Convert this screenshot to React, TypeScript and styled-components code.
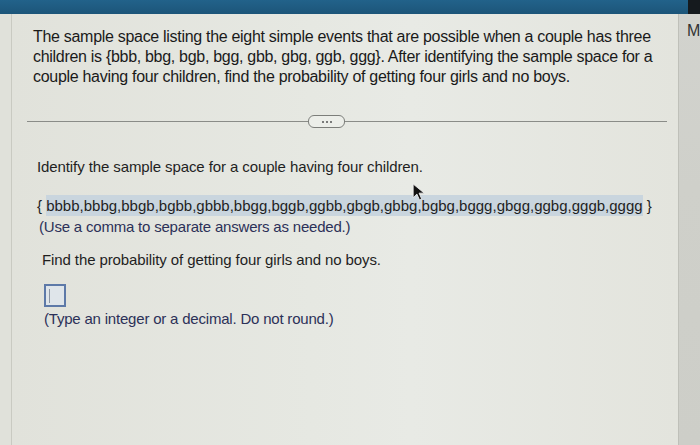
import React from "react";
import styled, { createGlobalStyle } from "styled-components";

const GlobalStyle = createGlobalStyle`
  html, body {
    margin: 0;
    padding: 0;
    background: #e3e4dd;
  }
  #root {
    width: 700px;
    height: 445px;
    overflow: hidden;
  }
`;

const Screen = styled.div`
  width: 700px;
  height: 445px;
  display: flex;
  flex-direction: column;
  font-family: "Liberation Sans", Arial, sans-serif;
  color: #222;
  position: relative;
`;

const TopBar = styled.div`
  height: 14px;
  display: flex;
  flex-shrink: 0;
`;

const BarBlue = styled.div`
  flex: 1;
  background: linear-gradient(180deg, #22628a 0%, #1c5579 100%);
`;

const BarDark = styled.div`
  width: 12px;
  background: #151a1e;
`;

const Body = styled.div`
  flex: 1;
  display: flex;
`;

const Gutter = styled.div`
  width: 11px;
  background: #e0e1da;
  border-right: 1px solid #c9cac2;
`;

const Panel = styled.div`
  flex: 1;
  display: flex;
  flex-direction: column;
  padding: 13px 0 0 21px;
  background: linear-gradient(90deg, #e1e2db 0%, #e6e8e2 45%, #e8eae5 60%, #e3e4dd 100%);
`;

const SideStrip = styled.div`
  width: 22px;
  background: linear-gradient(180deg, #d2d3ce 0%, #cfd0ca 40%, #cdcec8 100%);
  border-left: 1px solid #bfc0b9;
  padding: 8px 0 0 8px;
  font-size: 16px;
  color: #333;
  box-sizing: border-box;
  overflow: hidden;
`;

const Question = styled.p`
  margin: 0;
  font-size: 16px;
  line-height: 20px;
  letter-spacing: -0.3px;
  color: #1a1a1a;
  white-space: nowrap;
`;

const DividerRow = styled.div`
  display: flex;
  align-items: center;
  margin: 28px 0 0 -6px;
  width: 640px;
`;

const Rule = styled.div<{ $width?: number }>`
  flex: ${(p) => (p.$width ? `0 0 ${p.$width}px` : "1")};
  height: 1px;
  background: #8a8c88;
`;

const MoreButton = styled.div`
  width: 35px;
  height: 11px;
  border: 1px solid #7c7e7a;
  border-radius: 6px;
  background: #eceee9;
  display: flex;
  align-items: center;
  justify-content: center;
  gap: 2px;
`;

const Dot = styled.span`
  width: 2px;
  height: 2px;
  border-radius: 50%;
  background: #555;
`;

const Section = styled.div<{ $indent: number }>`
  display: flex;
  flex-direction: column;
  padding-left: ${(p) => p.$indent}px;
`;

const Prompt = styled.div<{ $top: number; $indent?: number }>`
  margin-top: ${(p) => p.$top}px;
  margin-left: ${(p) => p.$indent ?? 0}px;
  font-size: 15px;
  line-height: 18px;
  letter-spacing: -0.1px;
  color: #1f1f1f;
  white-space: nowrap;
`;

const AnswerLine = styled.div`
  margin-top: 21px;
  font-size: 15px;
  line-height: 18px;
  color: #1f1f1f;
  white-space: nowrap;
`;

const Highlight = styled.span`
  background: #c9d5de;
  padding: 2px 0;
`;

const Hint = styled.div<{ $top: number; $indent: number }>`
  margin-top: ${(p) => p.$top}px;
  margin-left: ${(p) => p.$indent}px;
  font-size: 15px;
  line-height: 18px;
  letter-spacing: -0.2px;
  color: #2c3158;
  white-space: nowrap;
`;

const InputBox = styled.div`
  margin: 15px 0 0 7px;
  width: 15px;
  height: 19px;
  border: 2px solid #5d79a8;
  background: #dfe5ea;
  display: flex;
  align-items: center;
  padding-left: 3px;
  box-sizing: content-box;
`;

const Caret = styled.div`
  width: 1px;
  height: 14px;
  background: #8b94a3;
`;

const Cursor = styled.svg`
  position: absolute;
  left: 412px;
  top: 183px;
`;

const answers =
  "bbbb,bbbg,bbgb,bgbb,gbbb,bbgg,bggb,ggbb,gbgb,gbbg,bgbg,bggg,gbgg,ggbg,gggb,gggg";

export default function App() {
  return (
    <>
      <GlobalStyle />
      <Screen>
        <TopBar>
          <BarBlue />
          <BarDark />
        </TopBar>
        <Body>
          <Gutter />
          <Panel>
            <Question>
              The sample space listing the eight simple events that are possible when a couple has three
              <br />
              children is {"{"}bbb, bbg, bgb, bgg, gbb, gbg, ggb, ggg{"}"}. After identifying the sample space for a
              <br />
              couple having four children, find the probability of getting four girls and no boys.
            </Question>
            <DividerRow>
              <Rule $width={281} />
              <MoreButton>
                <Dot />
                <Dot />
                <Dot />
              </MoreButton>
              <Rule />
            </DividerRow>
            <Section $indent={4}>
              <Prompt $top={30}>Identify the sample space for a couple having four children.</Prompt>
              <AnswerLine>
                {"{ "}
                <Highlight>{answers}</Highlight>
                {" }"}
              </AnswerLine>
              <Hint $top={3} $indent={2}>(Use a comma to separate answers as needed.)</Hint>
              <Prompt $top={15} $indent={5}>Find the probability of getting four girls and no boys.</Prompt>
              <InputBox>
                <Caret />
              </InputBox>
              <Hint $top={3} $indent={7}>(Type an integer or a decimal. Do not round.)</Hint>
            </Section>
          </Panel>
          <SideStrip>M</SideStrip>
        </Body>
        <Cursor width="15" height="19" viewBox="0 0 14 18">
          <path d="M1 1 L1 14 L4.5 10.5 L7 16 L9 15 L6.6 9.6 L11.5 9.6 Z" fill="#111" stroke="#eee" strokeWidth="0.8" />
        </Cursor>
      </Screen>
    </>
  );
}
